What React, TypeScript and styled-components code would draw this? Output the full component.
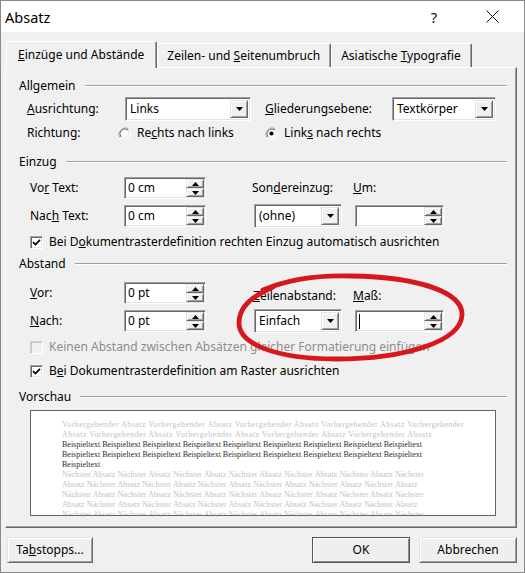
import React from 'react';
import styled, { createGlobalStyle, css } from 'styled-components';

const GlobalStyle = createGlobalStyle`
  html, body { margin: 0; padding: 0; background: #ffffff; }
  body {
    font-family: "Noto Sans", "Open Sans", "DejaVu Sans", sans-serif;
    font-size: 12px;
    line-height: 16px;
    color: #000;
  }
  #root { width: 525px; height: 573px; }
`;

const sunken = css`
  border: 1px solid;
  border-color: #a0a0a0 #ffffff #ffffff #a0a0a0;
  box-shadow: inset 1px 1px 0 #696969, inset -1px -1px 0 #e3e3e3;
`;

const raised = css`
  border: 1px solid;
  border-color: #e3e3e3 #696969 #696969 #e3e3e3;
  box-shadow: inset 1px 1px 0 #ffffff, inset -1px -1px 0 #a0a0a0;
  background: #f0f0f0;
`;

const Window = styled.div`
  position: relative;
  width: 525px;
  height: 573px;
  box-sizing: border-box;
  border: 1px solid #8a8a8a;
  background: #f0f0f0;
  display: flex;
  flex-direction: column;
  overflow: hidden;
`;

const TitleBar = styled.div`
  height: 31px;
  flex: none;
  background: #ffffff;
  display: flex;
  align-items: center;
  padding: 0 9px 0 4px;
`;

const Title = styled.div`
  flex: 1;
  font-size: 14.5px;
  line-height: 18px;
`;

const TitleButton = styled.div`
  width: 46px;
  height: 31px;
  display: flex;
  align-items: center;
  justify-content: center;
  font-size: 15px;
  color: #111;
  & + & { margin-left: 12px; }
`;

const Body = styled.div`
  display: flex;
  flex-direction: column;
  padding: 9px 7px 0 4px;
`;

const TabStrip = styled.div`
  height: 26px;
  display: flex;
  align-items: flex-end;
  padding-left: 1px;
`;

const Tab = styled.div<{ $active?: boolean }>`
  position: relative;
  z-index: ${p => (p.$active ? 1 : 0)};
  box-sizing: border-box;
  height: ${p => (p.$active ? 27 : 24)}px;
  margin-bottom: ${p => (p.$active ? -1 : 0)}px;
  padding: ${p => (p.$active ? '0 12px 0 11px' : '0 10px 0 9px')};
  display: flex;
  align-items: center;
  background: #f0f0f0;
  border: 1px solid;
  border-bottom: none;
  border-color: #ffffff #696969 transparent #ffffff;
  box-shadow: inset -1px 0 0 #a0a0a0;
  border-radius: 2px 2px 0 0;
  white-space: nowrap;
`;

const Panel = styled.div`
  height: 461px;
  box-sizing: border-box;
  border: 1px solid;
  border-color: #ffffff #696969 #696969 #ffffff;
  box-shadow: inset -1px -1px 0 #a0a0a0;
  padding: 10px 9px 0 13px;
  display: flex;
  flex-direction: column;
`;

const GroupHeader = styled.div<{ $mt?: number }>`
  height: 16px;
  margin-top: ${p => p.$mt ?? 0}px;
  display: flex;
  align-items: center;
  gap: 9px;
  &::after {
    content: '';
    flex: 1;
    height: 1px;
    background: #a0a0a0;
    border-bottom: 1px solid #ffffff;
  }
`;

const Row = styled.div<{ $mt: number; $h: number; $indent: number }>`
  height: ${p => p.$h}px;
  margin-top: ${p => p.$mt}px;
  padding-left: ${p => p.$indent}px;
  display: flex;
  align-items: center;
`;

const Label = styled.div<{ $w?: number; $lead?: number; $bottom?: boolean }>`
  flex: none;
  width: ${p => (p.$w ? `${p.$w}px` : 'auto')};
  margin-left: ${p => p.$lead ?? 0}px;
  align-self: ${p => (p.$bottom ? 'flex-end' : 'center')};
  white-space: nowrap;
`;

const SelectBox = styled.div<{ $w: number; $lead?: number }>`
  ${sunken};
  flex: none;
  width: ${p => p.$w}px;
  height: 24px;
  margin-left: ${p => p.$lead ?? 0}px;
  box-sizing: border-box;
  background: #ffffff;
  display: flex;
  align-items: center;
  padding: 2px 2px 2px 4px;
`;

const SelectText = styled.span`
  flex: 1;
  white-space: nowrap;
`;

const SelectButton = styled.div`
  ${raised};
  width: 18px;
  height: 18px;
  box-sizing: border-box;
  display: flex;
  align-items: center;
  justify-content: center;
`;

const SpinBox = styled.div<{ $w: number; $lead?: number }>`
  ${sunken};
  flex: none;
  width: ${p => p.$w}px;
  height: 22px;
  margin-left: ${p => p.$lead ?? 0}px;
  box-sizing: border-box;
  background: #ffffff;
  display: flex;
  align-items: stretch;
  padding: 1px 1px 1px 2px;
`;

const SpinValue = styled.div`
  flex: 1;
  display: flex;
  align-items: center;
  padding-left: 1px;
  white-space: nowrap;
`;

const Caret = styled.span`
  width: 1px;
  height: 15px;
  background: #000;
`;

const SpinButtons = styled.div`
  width: 18px;
  display: flex;
  flex-direction: column;
`;

const SpinButton = styled.div`
  ${raised};
  flex: 1;
  box-sizing: border-box;
  display: flex;
  align-items: center;
  justify-content: center;
`;

const RadioItem = styled.label<{ $w?: number; $lead?: number }>`
  flex: none;
  width: ${p => (p.$w ? `${p.$w}px` : 'auto')};
  margin-left: ${p => p.$lead ?? 0}px;
  display: flex;
  align-items: center;
  gap: 6px;
  white-space: nowrap;
`;

const CheckItem = styled.label<{ $disabled?: boolean }>`
  display: flex;
  align-items: center;
  gap: 6px;
  white-space: nowrap;
  color: ${p => (p.$disabled ? '#8d8d8d' : '#000')};
`;

const CheckBox = styled.span<{ $disabled?: boolean }>`
  ${sunken};
  width: 13px;
  height: 13px;
  box-sizing: border-box;
  flex: none;
  background: ${p => (p.$disabled ? '#f0f0f0' : '#ffffff')};
  ${p =>
    p.$disabled &&
    css`
      border-color: #d2d2d2 #ffffff #ffffff #d2d2d2;
      box-shadow: inset 1px 1px 0 #c8c8c8;
    `}
  display: flex;
  align-items: center;
  justify-content: center;
`;

const PreviewBox = styled.div`
  margin: 5px 0 0 11px;
  width: 466px;
  height: 106px;
  box-sizing: border-box;
  background: #ffffff;
  border: 1px solid #646464;
  padding: 9px 0 0 31px;
  overflow: hidden;
  font-family: "Liberation Serif", "DejaVu Serif", serif;
  font-size: 8px;
  line-height: 10px;
`;

type Tone = 'before' | 'sample' | 'after';

const PreviewLine = styled.div<{ $tone: Tone }>`
  white-space: nowrap;
  color: ${p => (p.$tone === 'sample' ? '#2b2b2b' : '#c2c2c2')};
  letter-spacing: ${p => (p.$tone === 'before' ? '0.45px' : p.$tone === 'after' ? '0.08px' : '0')};
`;

const Footer = styled.div`
  display: flex;
  padding: 9px 7px 0 6px;
`;

const Button = styled.button<{ $w: number; $default?: boolean; $push?: boolean }>`
  ${raised};
  width: ${p => p.$w}px;
  height: 26px;
  box-sizing: border-box;
  margin-left: ${p => (p.$push ? 'auto' : '9px')};
  &:first-child { margin-left: 0; }
  font: inherit;
  color: #000;
  padding: 0;
  background: #efefef;
  ${p =>
    p.$default &&
    css`
      border-color: #555 #555 #555 #555;
      box-shadow: inset 1px 1px 0 #ffffff, inset -1px -1px 0 #8a8a8a;
    `}
`;

const Annotation = styled.svg`
  position: absolute;
  left: 0;
  top: 0;
  pointer-events: none;
`;

const DownArrow = () => (
  <svg width="7" height="4" viewBox="0 0 7 4">
    <polygon points="0,0 7,0 3.5,4" fill="#000" />
  </svg>
);

const UpArrow = () => (
  <svg width="7" height="4" viewBox="0 0 7 4">
    <polygon points="0,4 7,4 3.5,0" fill="#000" />
  </svg>
);

const Select = ({ w, lead, value }: { w: number; lead?: number; value: string }) => (
  <SelectBox $w={w} $lead={lead}>
    <SelectText>{value}</SelectText>
    <SelectButton>
      <DownArrow />
    </SelectButton>
  </SelectBox>
);

const Spinner = ({
  w,
  lead,
  value,
  focused,
}: {
  w: number;
  lead?: number;
  value?: string;
  focused?: boolean;
}) => (
  <SpinBox $w={w} $lead={lead}>
    <SpinValue>{focused ? <Caret /> : value}</SpinValue>
    <SpinButtons>
      <SpinButton>
        <UpArrow />
      </SpinButton>
      <SpinButton>
        <DownArrow />
      </SpinButton>
    </SpinButtons>
  </SpinBox>
);

/* Classic sunken radio button: dark arcs on the upper left, light ones on the lower right. */
const RadioMark = ({ checked }: { checked?: boolean }) => (
  <svg width="13" height="13" viewBox="0 0 13 13">
    <circle cx="6.5" cy="6.5" r="6" fill="#ffffff" />
    <path d="M2.3 10.7 A6 6 0 0 1 10.7 2.3" stroke="#a0a0a0" strokeWidth="1" fill="none" />
    <path d="M3 10 A5 5 0 0 1 10 3" stroke="#696969" strokeWidth="1" fill="none" />
    <path d="M10.7 2.3 A6 6 0 0 1 2.3 10.7" stroke="#ffffff" strokeWidth="1" fill="none" />
    <path d="M10 3 A5 5 0 0 1 3 10" stroke="#e3e3e3" strokeWidth="1" fill="none" />
    {checked && <circle cx="6.5" cy="6.5" r="2.1" fill="#000" />}
  </svg>
);

const CheckMark = () => (
  <svg width="9" height="9" viewBox="0 0 9 9">
    <path d="M1 4.2 L3.4 6.6 L8 1.8" stroke="#000" strokeWidth="1.7" fill="none" />
  </svg>
);

const before1 =
  'Vorhergehender Absatz Vorhergehender Absatz Vorhergehender Absatz Vorhergehender Absatz Vorhergehender';
const before2 =
  'Absatz Vorhergehender Absatz Vorhergehender Absatz Vorhergehender Absatz Vorhergehender Absatz';
const sample = Array(9).fill('Beispieltext').join(' ');
const nextA = 'Nächster Absatz Nächster Absatz Nächster Absatz Nächster Absatz Nächster Absatz Nächster Absatz Nächster';
const nextB = 'Absatz Nächster Absatz Nächster Absatz Nächster Absatz Nächster Absatz Nächster Absatz Nächster Absatz';

const previewLines: { text: string; tone: Tone }[] = [
  { text: before1, tone: 'before' },
  { text: before2, tone: 'before' },
  { text: sample, tone: 'sample' },
  { text: sample, tone: 'sample' },
  { text: 'Beispieltext', tone: 'sample' },
  { text: nextA, tone: 'after' },
  { text: nextB, tone: 'after' },
  { text: nextA, tone: 'after' },
  { text: nextB, tone: 'after' },
  { text: nextA, tone: 'after' },
];

export default function App() {
  return (
    <>
      <GlobalStyle />
      <Window>
        <TitleBar>
          <Title>Absatz</Title>
          <TitleButton>?</TitleButton>
          <TitleButton>
            <svg width="13" height="13" viewBox="0 0 13 13">
              <path d="M0.5 0.5 L12.5 12.5 M12.5 0.5 L0.5 12.5" stroke="#111" strokeWidth="1" />
            </svg>
          </TitleButton>
        </TitleBar>

        <Body>
          <TabStrip>
            <Tab $active>
              <span>
                <u>E</u>inzüge und Abstände
              </span>
            </Tab>
            <Tab>
              <span>
                Zeilen- und <u>S</u>eitenumbruch
              </span>
            </Tab>
            <Tab>
              <span>
                Asiatische <u>T</u>ypografie
              </span>
            </Tab>
          </TabStrip>

          <Panel>
            <GroupHeader>Allgemein</GroupHeader>
            <Row $mt={3} $h={24} $indent={8}>
              <Label $w={98}>
                <u>A</u>usrichtung:
              </Label>
              <Select w={126} value="Links" />
              <Label $w={127} $lead={14}>
                <u>G</u>liederungsebene:
              </Label>
              <Select w={104} value="Textkörper" />
            </Row>
            <Row $mt={4} $h={16} $indent={8}>
              <Label $w={91}>Richtung:</Label>
              <RadioItem $w={147}>
                <RadioMark />
                <span>
                  Re<u>c</u>hts nach links
                </span>
              </RadioItem>
              <RadioItem>
                <RadioMark checked />
                <span>
                  Link<u>s</u> nach rechts
                </span>
              </RadioItem>
            </Row>

            <GroupHeader $mt={13}>Einzug</GroupHeader>
            <Row $mt={7} $h={22} $indent={11}>
              <Label $w={94}>
                Vo<u>r</u> Text:
              </Label>
              <Spinner w={82} value="0 cm" />
              <Label $w={101} $lead={46}>
                Son<u>d</u>ereinzug:
              </Label>
              <Label>
                <u>U</u>m:
              </Label>
            </Row>
            <Row $mt={5} $h={24} $indent={11}>
              <Label $w={94}>
                Nac<u>h</u> Text:
              </Label>
              <Spinner w={82} value="0 cm" />
              <Select w={88} lead={48} value="(ohne)" />
              <Spinner w={89} lead={13} />
            </Row>
            <Row $mt={6} $h={16} $indent={11}>
              <CheckItem>
                <CheckBox>
                  <CheckMark />
                </CheckBox>
                <span>
                  Bei D<u>o</u>kumentrasterdefinition rechten Einzug automatisch ausrichten
                </span>
              </CheckItem>
            </Row>

            <GroupHeader $mt={6}>Abstand</GroupHeader>
            <Row $mt={10} $h={22} $indent={11}>
              <Label $w={94}>
                <u>V</u>or:
              </Label>
              <Spinner w={82} value="0 pt" />
              <Label $w={100} $lead={47} $bottom>
                <u>Z</u>eilenabstand:
              </Label>
              <Label $bottom>
                <u>M</u>aß:
              </Label>
            </Row>
            <Row $mt={5} $h={24} $indent={11}>
              <Label $w={94}>
                <u>N</u>ach:
              </Label>
              <Spinner w={82} value="0 pt" />
              <Select w={88} lead={48} value="Einfach" />
              <Spinner w={89} lead={13} focused />
            </Row>
            <Row $mt={6} $h={16} $indent={11}>
              <CheckItem $disabled>
                <CheckBox $disabled />
                <span>Keinen Abstand zwischen Absätzen gleicher Formatierung einfügen</span>
              </CheckItem>
            </Row>
            <Row $mt={8} $h={16} $indent={11}>
              <CheckItem>
                <CheckBox>
                  <CheckMark />
                </CheckBox>
                <span>
                  B<u>e</u>i Dokumentrasterdefinition am Raster ausrichten
                </span>
              </CheckItem>
            </Row>

            <GroupHeader $mt={10}>Vorschau</GroupHeader>
            <PreviewBox>
              {previewLines.map((line, i) => (
                <PreviewLine key={i} $tone={line.tone}>
                  {line.text}
                </PreviewLine>
              ))}
            </PreviewBox>
          </Panel>
        </Body>

        <Footer>
          <Button $w={86}>
            Ta<u>b</u>stopps...
          </Button>
          <Button $w={98} $push $default>
            OK
          </Button>
          <Button $w={98}>Abbrechen</Button>
        </Footer>

        {/* Hand-drawn red marker ring around the line-spacing fields */}
        <Annotation width="525" height="573" viewBox="0 0 525 573">
          <path
            d="M262 289 C290 277 320 274 350 275 C420 276 462 292 461 314 C460 340 405 358 335 358 C275 358 238 343 238 322 C238 306 250 296 272 286"
            stroke="#d8161e"
            strokeWidth="4.8"
            fill="none"
            strokeLinecap="round"
          />
        </Annotation>
      </Window>
    </>
  );
}
